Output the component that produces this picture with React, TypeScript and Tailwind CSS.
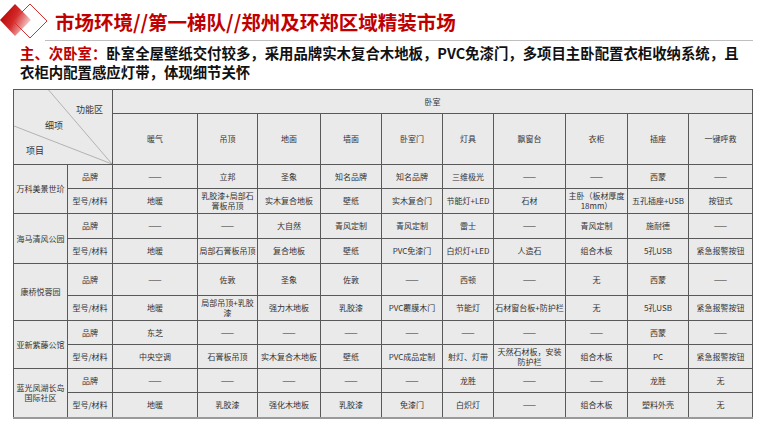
const cols = ['暖气', '吊顶', '地面', '墙面', '卧室门', '灯具', '飘窗台', '衣柜', '插座', '一键呼救'];

const D = '——';

type Project = {
  name: string;
  brandH: string;
  brand: string[];
  model: string[];
};

const projects: Project[] = [
  {
    name: '万科美景世玠',
    brandH: 'h-[24px]',
    brand: [D, '立邦', '圣象', '知名品牌', '知名品牌', '三维极光', D, D, '西蒙', D],
    model: ['地暖', '乳胶漆+局部石\n膏板吊顶', '实木复合地板', '壁纸', '实木复合门', '节能灯+LED', '石材', '主卧（板材厚度\n18mm）', '五孔插座+USB', '按钮式'],
  },
  {
    name: '海马清风公园',
    brandH: 'h-[25px]',
    brand: [D, D, '大自然', '青风定制', '青风定制', '雷士', D, '青风定制', '施耐德', D],
    model: ['地暖', '局部石膏板吊顶', '复合地板', '壁纸', 'PVC免漆门', '白炽灯+LED', '人造石', '组合木板', '5孔USB', '紧急报警按钮'],
  },
  {
    name: '康桥悦蓉园',
    brandH: 'h-[32px]',
    brand: [D, '佐敦', '圣象', '佐敦', D, '西顿', D, '无', '西蒙', D],
    model: ['地暖', '局部吊顶+乳胶\n漆', '强力木地板', '乳胶漆', 'PVC覆膜木门', '节能灯', '石材窗台板+防护栏', '无', '5孔USB', '紧急报警按钮'],
  },
  {
    name: '亚新紫藤公馆',
    brandH: 'h-[24px]',
    brand: ['东芝', D, D, D, D, D, D, D, '西蒙', D],
    model: ['中央空调', '石膏板吊顶', '实木复合木地板', '壁纸', 'PVC成品定制', '射灯、灯带', '天然石材板，安装\n防护栏', '组合木板', 'PC', '紧急报警按钮'],
  },
  {
    name: '蓝光凤湖长岛\n国际社区',
    brandH: 'h-[24px]',
    brand: [D, D, D, D, D, '龙胜', D, D, '龙胜', '无'],
    model: ['地暖', '乳胶漆', '强化木地板', '乳胶漆', '免漆门', '白炽灯', D, '组合木板', '塑料外壳', '无'],
  },
];

const modelH = ['h-[25px]', 'h-[25px]', 'h-[25px]', 'h-[24px]', 'h-[25px]'];

const cell = 'border border-[#595959] p-0 align-middle whitespace-pre-line leading-[10px]';

function Logo() {
  return (
    <svg width="50" height="40" viewBox="0 0 50 40" className="shrink-0">
      <defs>
        <linearGradient id="lg" x1="0" y1="0.25" x2="1" y2="0.8">
          <stop offset="0" stopColor="#b30000" />
          <stop offset="0.45" stopColor="#d42a2a" />
          <stop offset="1" stopColor="#ffffff" />
        </linearGradient>
      </defs>
      <polygon points="0,20 15,4 31,20 15,36" fill="url(#lg)" />
      <polygon points="13,21 30,4 47,21 30,38" fill="none" stroke="#d83030" strokeWidth="1" />
    </svg>
  );
}

export default function App() {
  return (
    <div
      className="w-[760px] h-[424px] bg-white overflow-hidden"
      style={{ fontFamily: '"Noto Sans CJK SC", "Noto Sans", sans-serif' }}
    >
      {/* Title */}
      <div className="flex items-center h-[40px]">
        <Logo />
        <h1 className="ml-[5px] pt-[4px] text-[19.5px] leading-none font-bold text-[#c00000] whitespace-nowrap">
          市场环境//第一梯队//郑州及环郑区域精装市场
        </h1>
      </div>
      <div className="ml-[45px] mr-[7px] h-px bg-[#bfbfbf]" />

      {/* Summary */}
      <div className="mt-[2px] ml-[20px] text-[14.4px] leading-[19px] font-bold text-[#111] whitespace-nowrap">
        <div>
          <span className="text-[#c00000]">主、次卧室：</span>
          卧室全屋壁纸交付较多，采用品牌实木复合木地板，PVC免漆门，多项目主卧配置衣柜收纳系统，且
        </div>
        <div>衣柜内配置感应灯带，体现细节关怀</div>
      </div>

      {/* Table */}
      <table className="mt-[8px] ml-[13px] w-[739px] table-fixed border-collapse bg-[#eaeaea] text-[8px] text-[#333] text-center border-b-2 border-b-[#9a9a9a]">
        <colgroup>
          <col className="w-[54px]" />
          <col className="w-[45px]" />
          <col className="w-[85px]" />
          <col className="w-[60px]" />
          <col className="w-[63px]" />
          <col className="w-[61px]" />
          <col className="w-[61px]" />
          <col className="w-[51px]" />
          <col className="w-[72px]" />
          <col className="w-[62px]" />
          <col className="w-[61px]" />
          <col className="w-[64px]" />
        </colgroup>
        <tbody>
          <tr className="h-[24px]">
            <td colSpan={2} rowSpan={2} className={cell}>
              <div className="relative h-[74px] text-[9px] leading-none">
                <svg className="absolute inset-0" width="100%" height="100%" viewBox="0 0 99 74" preserveAspectRatio="none">
                  <line x1="35" y1="0" x2="99" y2="74" stroke="#8c8c8c" strokeWidth="0.6" />
                  <line x1="0" y1="36" x2="99" y2="74" stroke="#8c8c8c" strokeWidth="0.6" />
                </svg>
                <span className="absolute left-[62px] top-[15px]">功能区</span>
                <span className="absolute left-[31px] top-[31px]">细项</span>
                <span className="absolute left-[12px] top-[56px]">项目</span>
              </div>
            </td>
            <td colSpan={10} className={cell}>
              卧室
            </td>
          </tr>
          <tr className="h-[51px]">
            {cols.map((c) => (
              <td key={c} className={cell}>
                {c}
              </td>
            ))}
          </tr>
          {projects.map((p, i) => (
            <>
              <tr key={p.name + 'b'} className={p.brandH}>
                <td rowSpan={2} className={cell}>
                  {p.name}
                </td>
                <td className={cell}>品牌</td>
                {p.brand.map((v, j) => (
                  <td key={j} className={cell}>
                    {v}
                  </td>
                ))}
              </tr>
              <tr key={p.name + 'm'} className={modelH[i]}>
                <td className={cell}>型号/材料</td>
                {p.model.map((v, j) => (
                  <td key={j} className={cell}>
                    {v}
                  </td>
                ))}
              </tr>
            </>
          ))}
        </tbody>
      </table>
    </div>
  );
}
